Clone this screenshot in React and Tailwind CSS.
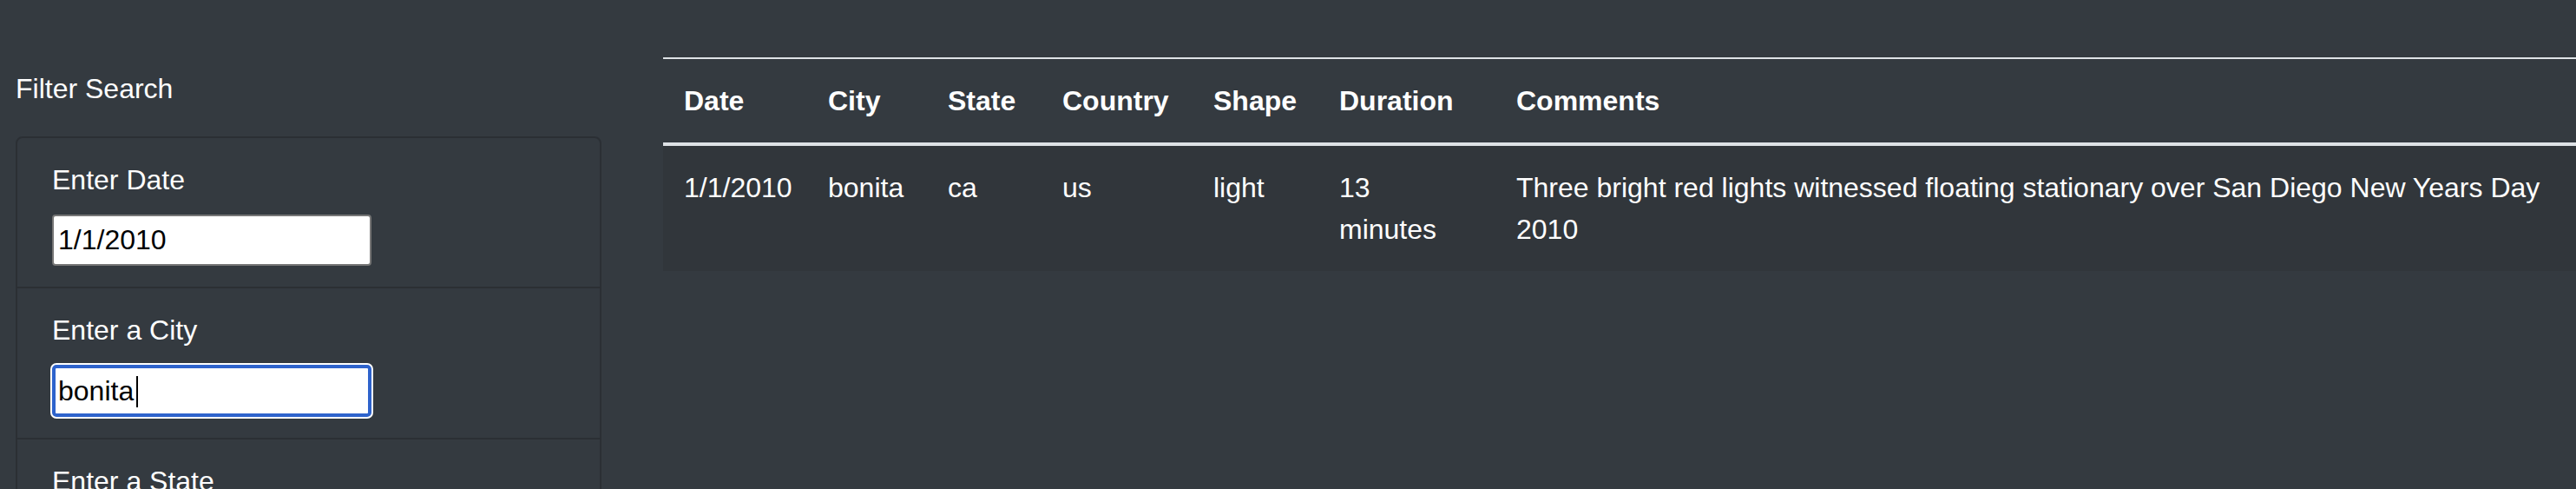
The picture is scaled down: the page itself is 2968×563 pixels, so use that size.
import { useState } from 'react'

const columns = [
  { key: 'datetime', label: 'Date', width: 'w-[166px]' },
  { key: 'city', label: 'City', width: 'w-[138px]' },
  { key: 'state', label: 'State', width: 'w-[132px]' },
  { key: 'country', label: 'Country', width: 'w-[174px]' },
  { key: 'shape', label: 'Shape', width: 'w-[145px]' },
  { key: 'durationMinutes', label: 'Duration', width: 'w-[204px]' },
  { key: 'comments', label: 'Comments', width: 'w-[1263px]' },
]

const sightings = [
  {
    datetime: '1/1/2010',
    city: 'bonita',
    state: 'ca',
    country: 'us',
    shape: 'light',
    durationMinutes: '13 minutes',
    comments: 'Three bright red lights witnessed floating stationary over San Diego New Years Day 2010',
  },
]

const filters = [
  { id: 'datetime', label: 'Enter Date', value: '1/1/2010' },
  { id: 'city', label: 'Enter a City', value: 'bonita', focused: true },
  { id: 'state', label: 'Enter a State', value: '' },
  { id: 'country', label: 'Enter a Country', value: '' },
  { id: 'shape', label: 'Enter a Shape', value: '' },
]

const App = () => {
  const [values] = useState(
    Object.fromEntries(filters.map((f) => [f.id, f.value]))
  )

  return (
    <div className="h-[563px] overflow-hidden bg-[#343a40] text-white font-['Liberation_Sans',Arial,sans-serif] text-[32px] leading-[48px] flex">
      {/* sidebar */}
      <div className="pl-[18px] w-[693px] shrink-0">
        <h5 className="mt-[78px] mb-[31px] text-[32px] leading-[48px] font-normal">Filter Search</h5>
        <ul className="border-2 border-[#2b2f34] rounded-lg">
          {filters.map((f, i) => (
            <li
              key={f.id}
              className={`px-[40px] py-[24px] ${i < filters.length - 1 ? 'border-b-2 border-[#2b2f34]' : ''}`}
            >
              <label htmlFor={f.id} className="block mb-[16px]">{f.label}</label>
              <div className="relative w-fit">
                <input
                  id={f.id}
                  type="text"
                  readOnly
                  defaultValue={values[f.id]}
                  className={
                    f.focused
                      ? 'block w-[368px] h-[60px] bg-white text-black text-[32px] rounded-[5px] border-4 border-[#2e63cc] shadow-[0_0_0_2px_#ffffff] px-[3px] outline-none'
                      : 'block w-[368px] h-[59px] bg-white text-black text-[32px] rounded-[4px] border-2 border-[#767676] px-[5px] outline-none'
                  }
                />
                {f.focused && (
                  <span className="absolute left-[97px] top-[13px] w-[2px] h-[36px] bg-black" />
                )}
              </div>
            </li>
          ))}
        </ul>
      </div>

      {/* results table */}
      <div className="ml-[71px] mt-[66px] shrink-0">
        <table className="table-fixed border-collapse bg-[#31363b] w-[2222px]">
          <colgroup>
            {columns.map((c) => (
              <col key={c.key} className={c.width} />
            ))}
          </colgroup>
          <thead>
            <tr>
              {columns.map((c) => (
                <th
                  key={c.key}
                  className="text-left font-bold p-[24px] border-t-2 border-b-4 border-[#dee2e6] bg-[#343a40]"
                >
                  {c.label}
                </th>
              ))}
            </tr>
          </thead>
          <tbody>
            {sightings.map((s, i) => (
              <tr key={i}>
                {columns.map((c) => (
                  <td key={c.key} className="p-[24px] align-top">
                    {s[c.key]}
                  </td>
                ))}
              </tr>
            ))}
          </tbody>
        </table>
      </div>
    </div>
  )
}

export default App
